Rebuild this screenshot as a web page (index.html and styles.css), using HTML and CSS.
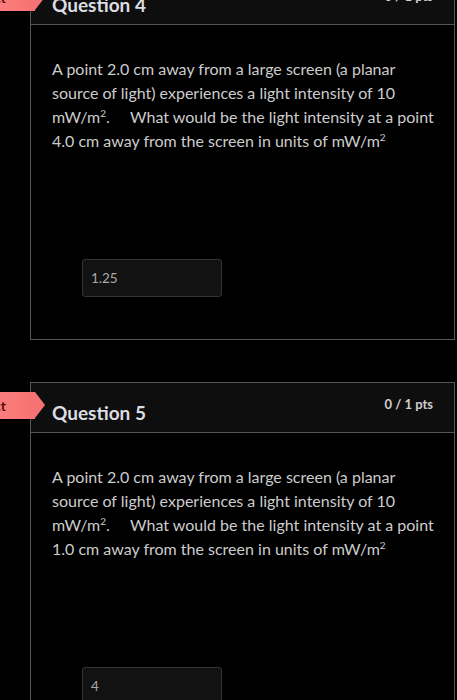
FILE: index.html
```html
<!DOCTYPE html>
<html lang="en">
<head>
<meta charset="utf-8">
<title>Quiz</title>
<link rel="stylesheet" href="styles.css">
</head>
<body>
<div class="page">
  <div class="question first">
    <div class="tag"><span>Incorrect</span></div>
    <div class="card">
      <div class="header">
        <h2 class="title">Question 4</h2>
        <span class="pts">0 / 1 pts</span>
      </div>
      <div class="body">
        <p class="text">A point 2.0 cm away from a large screen (a planar source of light) experiences a light intensity of 10 mW/m<sup>2</sup>. &nbsp;&nbsp;&nbsp; What would be the light intensity at a point 4.0 cm away from the screen in units of mW/m<sup>2</sup></p>
        <div class="answer">1.25</div>
      </div>
    </div>
  </div>
  <div class="question">
    <div class="tag"><span>Incorrect</span></div>
    <div class="card">
      <div class="header">
        <h2 class="title">Question 5</h2>
        <span class="pts">0 / 1 pts</span>
      </div>
      <div class="body">
        <p class="text">A point 2.0 cm away from a large screen (a planar source of light) experiences a light intensity of 10 mW/m<sup>2</sup>. &nbsp;&nbsp;&nbsp; What would be the light intensity at a point 1.0 cm away from the screen in units of mW/m<sup>2</sup></p>
        <div class="answer">4</div>
      </div>
    </div>
  </div>
</div>
</body>
</html>
```
FILE: styles.css
```css
html, body {
  margin: 0;
  padding: 0;
  background: #000;
  height: 100%;
  overflow: hidden;
}
.page {
  font-family: Lato, "Open Sans", sans-serif;
  color: #d4d4d4;
  padding-left: 30px;
  padding-right: 2px;
}
.question {
  position: relative;
  margin-bottom: 42px;
}
.question.first {
  margin-top: -26px;
}
.card {
  border: 1px solid #555;
  background: #000;
}
.header {
  background: #0e0e0e;
  border-bottom: 1px solid #555;
  height: 49px;
  display: flex;
  justify-content: space-between;
  align-items: flex-start;
  padding: 0 21px;
}
.title {
  margin: 18px 0 0 0;
  font-size: 19px;
  font-weight: 700;
  color: #dcdde2;
  line-height: 24px;
}
.pts {
  margin-top: 12px;
  font-size: 13px;
  font-weight: 700;
  color: #cfcfcf;
  line-height: 18px;
}
.body {
  padding: 32px 12px 42px 21px;
}
.text {
  margin: 0;
  font-size: 16px;
  line-height: 24px;
  color: #cccccc;
}
.text sup {
  font-size: 10px;
  line-height: 0;
  vertical-align: 6px;
}
.answer {
  margin: 106px 0 0 30px;
  width: 130px;
  height: 36px;
  box-sizing: content-box;
  padding: 0 0 0 8px;
  border: 1px solid #343434;
  border-radius: 3px;
  background: #121212;
  color: #a8a8a8;
  font-size: 13.5px;
  line-height: 36px;
}
.tag {
  position: absolute;
  top: 10px;
  right: calc(100% - 15px);
  height: 27px;
  display: flex;
}
.tag span {
  display: block;
  background: linear-gradient(to right, #ff8d8d, #f77272);
  color: #5a0a0a;
  font-weight: 700;
  font-size: 14px;
  line-height: 27px;
  padding: 0 29px 0 0;
  white-space: nowrap;
}
.tag::after {
  content: "";
  width: 0;
  height: 0;
  border-top: 13.5px solid transparent;
  border-bottom: 13.5px solid transparent;
  border-left: 10px solid #f77272;
}
```
